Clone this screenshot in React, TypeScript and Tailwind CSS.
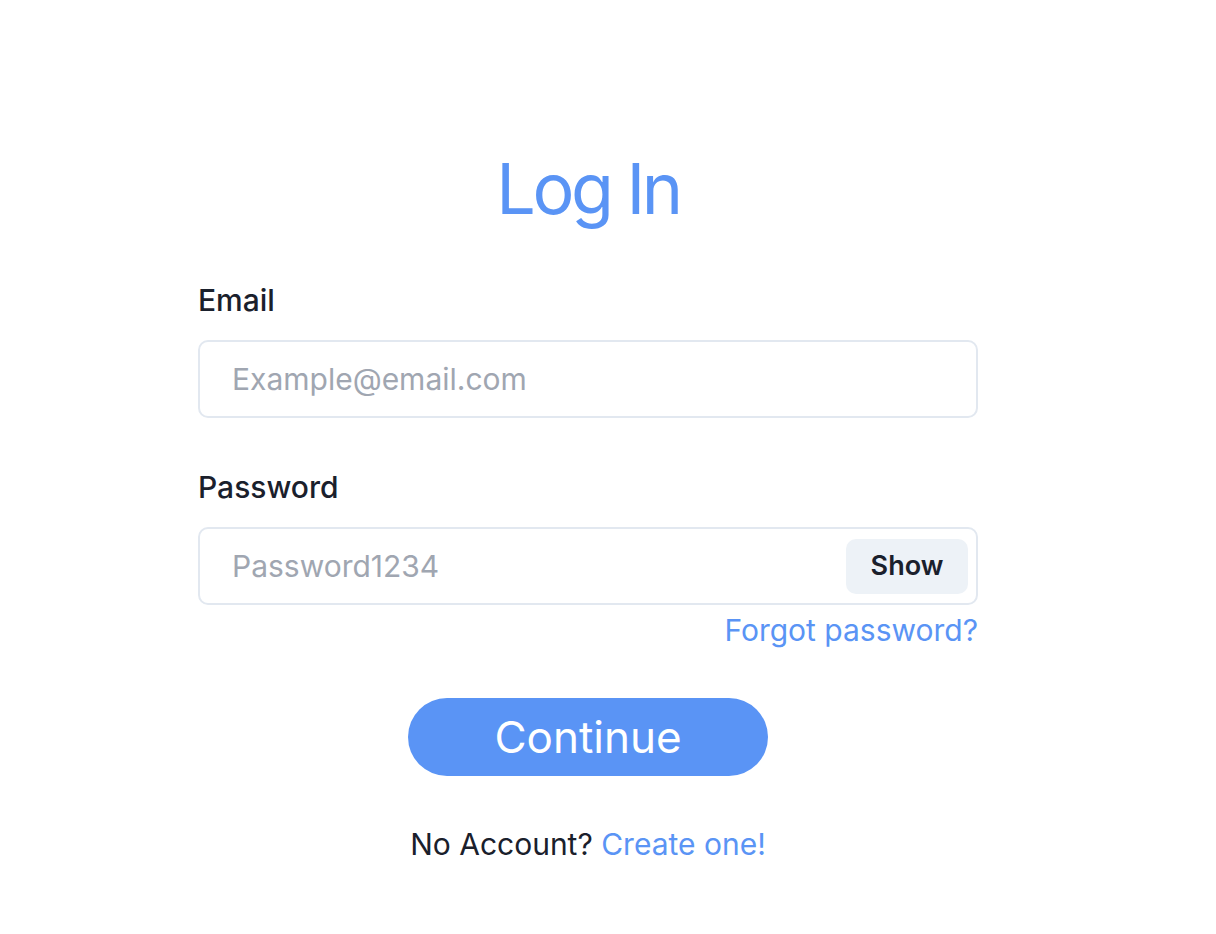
// Log in screen: centered form column with title, two fields and a pill button

import { useState } from 'react'

export default function App() {
  const [email, setEmail] = useState('')
  const [password, setPassword] = useState('')
  const [showPassword, setShowPassword] = useState(false)

  return (
    <div className="min-h-screen bg-white font-['Inter',sans-serif] text-[#1a202c]">
      <div className="w-[780px] ml-[198px] pt-[147px] flex flex-col">
        {/* Title */}
        <h1 className="text-center text-[70px] leading-[84px] font-normal text-[#5a94f5] tracking-[-0.05em]">
          Log In
        </h1>

        {/* Email */}
        <label className="mt-[51px] text-[30px] leading-[36px] font-medium">Email</label>
        <input
          type="email"
          className="mt-[22px] h-[78px] w-full rounded-[10px] border-2 border-[#e2e8f0] px-[32px] text-[30px] outline-none placeholder:text-[#a0a6b1]"
          placeholder="Example@email.com"
          value={email}
          onChange={(e) => setEmail(e.target.value)}
        />

        {/* Password */}
        <label className="mt-[51px] text-[30px] leading-[36px] font-medium">Password</label>
        <div className="mt-[22px] h-[78px] w-full rounded-[10px] border-2 border-[#e2e8f0] flex items-center pl-[32px] pr-[8px]">
          <input
            type={showPassword ? 'text' : 'password'}
            className="flex-1 min-w-0 h-full text-[30px] outline-none placeholder:text-[#a0a6b1]"
            placeholder="Password1234"
            value={password}
            onChange={(e) => setPassword(e.target.value)}
          />
          <button
            type="button"
            className="w-[122px] h-[55px] rounded-[10px] bg-[#edf2f7] text-[27px] font-semibold text-[#1a202c]"
            onClick={() => setShowPassword(!showPassword)}
          >
            {showPassword ? 'Hide' : 'Show'}
          </button>
        </div>
        <div className="mt-[7px] flex justify-end">
          <a href="#" className="text-[30px] leading-[36px] text-[#5a94f5]">
            Forgot password?
          </a>
        </div>

        {/* Continue */}
        <button
          type="button"
          className="mt-[50px] self-center w-[360px] h-[78px] rounded-full bg-[#5a94f5] text-white text-[44px]"
        >
          Continue
        </button>

        <p className="mt-[50px] text-center text-[30px] leading-[36px]">
          No Account? <a href="#" className="text-[#5a94f5]">Create one!</a>
        </p>
      </div>
    </div>
  )
}
